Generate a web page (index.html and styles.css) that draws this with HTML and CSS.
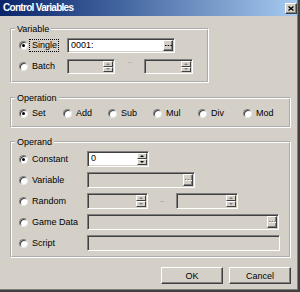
FILE: index.html
```html
<!DOCTYPE html>
<html>
<head>
<meta charset="utf-8">
<title>Control Variables</title>
<link rel="stylesheet" href="styles.css">
</head>
<body>
<div class="window">
  <div class="frame">
    <div class="titlebar">
      <span class="title">Control Variables</span>
      <span class="close-btn">
        <svg width="6" height="5" viewBox="0 0 6 5"><path d="M0.5 0.5L5.5 4.5M5.5 0.5L0.5 4.5" stroke="#000" stroke-width="1.3"/></svg>
      </span>
    </div>
    <div class="client">
      <fieldset class="group group-variable">
        <legend>Variable</legend>
        <div class="rows rows-variable">
          <div class="row">
            <label class="opt col-var"><span class="radio checked"></span><span class="focus">Single</span></label>
            <span class="edit w-single">
              <span class="edit-text">0001:</span>
              <span class="dots-btn"><svg width="7" height="1" viewBox="0 0 7 1"><rect x="0" width="1.5" height="1" fill="#000"/><rect x="2.7" width="1.5" height="1" fill="#000"/><rect x="5.4" width="1.5" height="1" fill="#000"/></svg></span>
            </span>
          </div>
          <div class="row">
            <label class="opt col-var"><span class="radio"></span><span class="txt">Batch</span></label>
            <span class="edit disabled w-batch1">
              <span class="edit-text"></span>
              <span class="spin-btns"><span class="sb"><span class="arr up dis"></span></span><span class="sb"><span class="arr down dis"></span></span></span>
            </span>
            <span class="tilde tilde-var">~</span>
            <span class="edit disabled w-batch2">
              <span class="edit-text"></span>
              <span class="spin-btns"><span class="sb"><span class="arr up dis"></span></span><span class="sb"><span class="arr down dis"></span></span></span>
            </span>
          </div>
        </div>
      </fieldset>

      <fieldset class="group group-operation">
        <legend>Operation</legend>
        <div class="rows rows-operation">
          <label class="opt"><span class="radio checked"></span><span class="txt">Set</span></label>
          <label class="opt"><span class="radio"></span><span class="txt">Add</span></label>
          <label class="opt"><span class="radio"></span><span class="txt">Sub</span></label>
          <label class="opt"><span class="radio"></span><span class="txt">Mul</span></label>
          <label class="opt"><span class="radio"></span><span class="txt">Div</span></label>
          <label class="opt"><span class="radio"></span><span class="txt">Mod</span></label>
        </div>
      </fieldset>

      <fieldset class="group group-operand">
        <legend>Operand</legend>
        <div class="rows rows-operand">
          <div class="row row16">
            <label class="opt col-op"><span class="radio checked"></span><span class="txt">Constant</span></label>
            <span class="edit w-const">
              <span class="edit-text">0</span>
              <span class="spin-btns"><span class="sb"><span class="arr up"></span></span><span class="sb"><span class="arr down"></span></span></span>
            </span>
          </div>
          <div class="row row16">
            <label class="opt col-op"><span class="radio"></span><span class="txt">Variable</span></label>
            <span class="edit disabled w-var">
              <span class="edit-text"></span>
              <span class="dots-btn"><svg width="7" height="2" viewBox="0 0 7 2"><g fill="#fff"><rect x="0.5" y="1" width="1.5" height="1"/><rect x="3.2" y="1" width="1.5" height="1"/><rect x="5.5" y="1" width="1.5" height="1"/></g><g fill="#808080"><rect x="0" width="1.5" height="1"/><rect x="2.7" width="1.5" height="1"/><rect x="5.4" width="1.5" height="1"/></g></svg></span>
            </span>
          </div>
          <div class="row row16">
            <label class="opt col-op"><span class="radio"></span><span class="txt">Random</span></label>
            <span class="edit disabled w-rand1">
              <span class="edit-text"></span>
              <span class="spin-btns"><span class="sb"><span class="arr up dis"></span></span><span class="sb"><span class="arr down dis"></span></span></span>
            </span>
            <span class="tilde tilde-op">~</span>
            <span class="edit disabled w-rand2">
              <span class="edit-text"></span>
              <span class="spin-btns"><span class="sb"><span class="arr up dis"></span></span><span class="sb"><span class="arr down dis"></span></span></span>
            </span>
          </div>
          <div class="row row16">
            <label class="opt col-op"><span class="radio"></span><span class="txt">Game Data</span></label>
            <span class="edit disabled w-game">
              <span class="edit-text"></span>
              <span class="dots-btn"><svg width="7" height="2" viewBox="0 0 7 2"><g fill="#fff"><rect x="0.5" y="1" width="1.5" height="1"/><rect x="3.2" y="1" width="1.5" height="1"/><rect x="5.5" y="1" width="1.5" height="1"/></g><g fill="#808080"><rect x="0" width="1.5" height="1"/><rect x="2.7" width="1.5" height="1"/><rect x="5.4" width="1.5" height="1"/></g></svg></span>
            </span>
          </div>
          <div class="row row16">
            <label class="opt col-op"><span class="radio"></span><span class="txt">Script</span></label>
            <span class="edit disabled w-script">
              <span class="edit-text"></span>
            </span>
          </div>
        </div>
      </fieldset>

      <div class="buttons">
        <span class="btn">OK</span>
        <span class="btn">Cancel</span>
      </div>
    </div>
  </div>
</div>
</body>
</html>
```

FILE: styles.css
```css
html, body {
  margin: 0;
  padding: 0;
  background: #d4d0c8;
}

body {
  font-family: "Liberation Sans", Arial, sans-serif;
  font-size: 9px;
  color: #000;
}

.window {
  width: 300px;
  height: 292px;
  box-sizing: border-box;
  border-right: 2px solid #404040;
  border-bottom: 2px solid #404040;
  background: #d4d0c8;
}

.frame {
  height: 100%;
  box-sizing: border-box;
  border-right: 1px solid #808080;
  border-bottom: 1px solid #808080;
  display: flex;
  flex-direction: column;
}

.titlebar {
  height: 16px;
  flex: none;
  display: flex;
  align-items: flex-start;
  padding-left: 3px;
  background: linear-gradient(to right, #0a246a 0%, #3a5c98 35%, #a6caf0 100%);
}

.title {
  color: #fff;
  font-weight: bold;
  font-size: 10px;
  letter-spacing: -0.7px;
  line-height: 16px;
}

.close-btn {
  margin-left: auto;
  margin-top: 3px;
  width: 12px;
  height: 11px;
  box-sizing: border-box;
  border: 1px solid;
  border-color: #fff #404040 #404040 #fff;
  box-shadow: inset -1px -1px 0 #808080;
  background: #d4d0c8;
  display: flex;
  align-items: center;
  justify-content: center;
}

.client {
  flex: 1;
  display: flex;
  flex-direction: column;
  padding: 7px 6px 0 10px;
}

.group {
  margin: 0;
  padding: 0;
  border: 2px groove #fff;
  min-width: 0;
  box-sizing: border-box;
}

.group legend {
  height: 12px;
  line-height: 12px;
  padding: 0 2px;
  margin-left: 3px;
}

.group-variable {
  width: 199px;
}

.group-operation {
  width: 281px;
  margin-top: 9px;
}

.group-operand {
  width: 281px;
  margin-top: 8px;
}

.rows {
  display: flex;
  flex-direction: column;
  padding-left: 7px;
}

.rows-variable {
  gap: 6px;
  padding-top: 3px;
  padding-bottom: 7px;
}

.rows-operation {
  display: grid;
  grid-template-columns: 44px 45px 45px 45px 45px 45px;
  padding-top: 2px;
  padding-bottom: 5px;
  height: 15px;
}

.rows-operand {
  gap: 5px;
  padding-top: 3px;
  padding-bottom: 5px;
}

.row {
  display: flex;
  align-items: center;
  height: 15px;
}

.row16 {
  height: 16px;
}

.opt {
  display: flex;
  align-items: center;
  height: 15px;
}

.col-var {
  width: 48px;
  flex: none;
}

.col-op {
  width: 68px;
  flex: none;
}

.radio {
  position: relative;
  flex: none;
  width: 9px;
  height: 9px;
  box-sizing: border-box;
  border-radius: 50%;
  background: #fff;
  border: 1px solid;
  border-color: #808080 #e8e8e8 #e8e8e8 #808080;
  box-shadow: inset 1px 1px 0 #404040;
}

.radio.checked::after {
  content: "";
  position: absolute;
  left: 2px;
  top: 2px;
  width: 3px;
  height: 3px;
  border-radius: 50%;
  background: #000;
}

.txt {
  margin-left: 4px;
  line-height: 11px;
}

.focus {
  margin-left: 1px;
  padding: 0 1px 0 2px;
  border: 1px dotted #000;
  line-height: 11px;
}

.edit {
  display: flex;
  align-items: stretch;
  box-sizing: border-box;
  height: 100%;
  flex: none;
  border: 1px solid;
  border-color: #808080 #fff #fff #808080;
  box-shadow: inset 1px 1px 0 #404040, inset -1px -1px 0 #d4d0c8;
  padding: 1px;
  background: #fff;
}

.edit.disabled {
  background: #d4d0c8;
}

.edit-text {
  flex: 1;
  padding-left: 2px;
  line-height: 11px;
}

.w-single { width: 108px; }
.w-batch1 { width: 48px; }
.w-batch2 { width: 49px; }
.w-const  { width: 62px; }
.w-var    { width: 108px; }
.w-rand1  { width: 61px; }
.w-rand2  { width: 62px; }
.w-game   { width: 192px; }
.w-script { width: 193px; }

.tilde {
  flex: none;
  text-align: center;
  color: #a0a0a0;
  font-size: 8px;
}

.tilde-var {
  width: 29px;
  align-self: flex-start;
  line-height: 8px;
}

.tilde-op {
  width: 28px;
}

.dots-btn {
  width: 10px;
  flex: none;
  box-sizing: border-box;
  border: 1px solid;
  border-color: #fff #404040 #404040 #fff;
  box-shadow: inset -1px -1px 0 #808080;
  background: #d4d0c8;
  display: flex;
  align-items: center;
  justify-content: center;
}

.spin-btns {
  width: 10px;
  flex: none;
  display: flex;
  flex-direction: column;
}

.sb {
  flex: 1;
  box-sizing: border-box;
  border: 1px solid;
  border-color: #fff #404040 #404040 #fff;
  background: #d4d0c8;
  display: flex;
  align-items: center;
  justify-content: center;
}

.arr {
  width: 0;
  height: 0;
  border-left: 2px solid transparent;
  border-right: 2px solid transparent;
}

.arr.up {
  border-bottom: 2px solid #000;
}

.arr.down {
  border-top: 2px solid #000;
}

.arr.up.dis {
  border-bottom-color: #808080;
}

.arr.down.dis {
  border-top-color: #808080;
}

.buttons {
  display: flex;
  justify-content: flex-end;
  gap: 6px;
  margin-top: 9px;
}

.btn {
  width: 62px;
  height: 17px;
  box-sizing: border-box;
  display: flex;
  align-items: center;
  justify-content: center;
  border: 1px solid;
  border-color: #fff #404040 #404040 #fff;
  box-shadow: inset -1px -1px 0 #808080;
  background: #d4d0c8;
}
```
